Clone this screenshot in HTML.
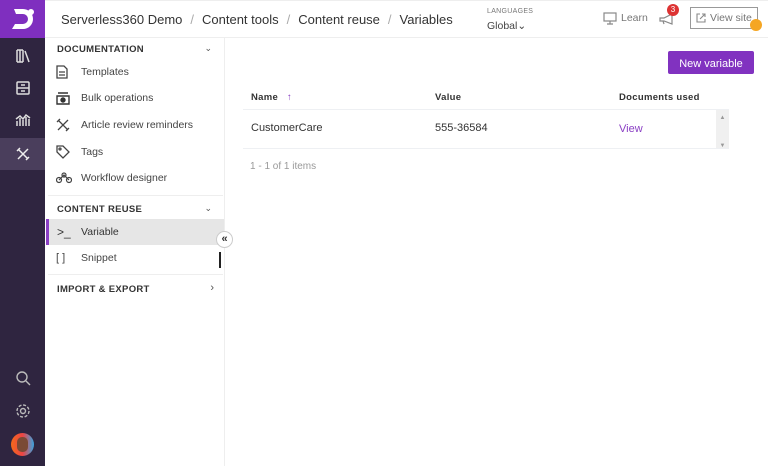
<!DOCTYPE html>
<html><head><style>
*{margin:0;padding:0;box-sizing:border-box}
body{width:768px;height:466px;overflow:hidden;font-family:"Liberation Sans",sans-serif;background:#fff;position:relative;color:#333}
.rail{position:absolute;left:0;top:0;width:45px;height:466px;background:#2f2540}
.logo{position:absolute;left:0;top:0;width:45px;height:38px;background:#7f2fbf}
.ri{position:absolute;left:0;width:45px;height:32px;display:flex;align-items:center;justify-content:center}
.hdr{position:absolute;left:45px;top:0;width:723px;height:38px;border-bottom:1px solid #eee;border-top:1px solid #eee}
.bc{position:absolute;left:16px;top:11px;font-size:13px;color:#333}
.bc span.s{color:#aaa;margin:0 8px}
.side{position:absolute;left:46px;top:38px;width:179px;height:428px;border-right:1px solid #eee}
.sec{position:absolute;left:11px;font-size:9.5px;font-weight:bold;color:#333;letter-spacing:.3px}
.it{position:absolute;left:0;width:178px;height:26px;font-size:10.5px;color:#444;display:flex;align-items:center;padding-left:35px}
.ic{position:absolute;left:10px;top:6px}
.hr{position:absolute;left:2px;width:175px;height:1px;background:#eee}
.chev{position:absolute;right:12px;font-size:9px;color:#555}
</style></head><body>
<div class="rail">
<div class="logo"><svg width="45" height="38"><path d="M14 9h9a10 10 0 0 1 0 20h-11l3-5h8a5 5 0 0 0 0-10h-7z" fill="#fff"/><circle cx="31" cy="12" r="3" fill="#fff"/></svg></div>
<div class="ri" style="top:40px"><svg width="16" height="16" fill="none" stroke="#ddd" stroke-width="1.5"><path d="M2 2v12M5 2v12M8 2v12M10 3l4 11M2 2h6M2 14h6"/></svg></div>
<div class="ri" style="top:72px"><svg width="16" height="16" fill="none" stroke="#ddd" stroke-width="1.5"><rect x="2" y="2" width="12" height="12" rx="1"/><path d="M2 8h12M6 5h4M6 11h4"/></svg></div>
<div class="ri" style="top:104px"><svg width="16" height="16" fill="none" stroke="#ddd" stroke-width="1.5"><path d="M2 14V9M5 14V6M8 14V8M11 14V5M14 14V7M1 7l4-3 3 3 3-4 4 3"/></svg></div>
<div class="ri" style="top:138px;background:#4a3e5c"><svg width="16" height="16" fill="none" stroke="#eee" stroke-width="1.5"><path d="M3 3l10 10M13 3L3 13M2 5l3-3M11 14l3-3"/></svg></div>
<div class="ri" style="top:362px"><svg width="16" height="16" fill="none" stroke="#bbb" stroke-width="1.4"><circle cx="7" cy="7" r="5"/><path d="M11 11l4 4"/></svg></div>
<div class="ri" style="top:395px"><svg width="16" height="16" fill="none" stroke="#bbb" stroke-width="1.4"><circle cx="8" cy="8" r="2.5"/><circle cx="8" cy="8" r="6" stroke-dasharray="3 1.7"/></svg></div>
<div style="position:absolute;left:11px;top:433px;width:23px;height:23px;border-radius:50%;background:linear-gradient(90deg,#f26a1b,#e44,#3aa3e0)"><div style="position:absolute;left:6px;top:4px;width:11px;height:15px;border-radius:5px;background:#7a4a35"></div></div>
</div>
<div class="hdr">
<div class="bc">Serverless360 Demo<span class="s">/</span>Content tools<span class="s">/</span>Content reuse<span class="s">/</span>Variables</div>
<div style="position:absolute;left:442px;top:7px;font-size:7px;color:#777;letter-spacing:.3px">LANGUAGES</div>
<div style="position:absolute;left:442px;top:19px;font-size:10.5px;color:#444">Global&#8964;</div>
<svg style="position:absolute;left:558px;top:11px" width="14" height="13" fill="none" stroke="#888" stroke-width="1.2"><rect x="1" y="1" width="12" height="8"/><path d="M7 9v3M4 12h6"/></svg>
<div style="position:absolute;left:576px;top:11px;font-size:10.5px;color:#777">Learn</div>
<svg style="position:absolute;left:614px;top:12px" width="15" height="12" fill="none" stroke="#888" stroke-width="1.2"><path d="M1 5h4l8-4v10l-8-3H1zM4 8l1 3"/></svg>
<div style="position:absolute;left:622px;top:3px;width:12px;height:12px;border-radius:50%;background:#d33;color:#fff;font-size:8px;text-align:center;line-height:12px">3</div>
<div style="position:absolute;left:645px;top:6px;width:68px;height:22px;border:1px solid #999;font-size:10.5px;color:#777;padding:4px 0 0 19px">View site</div>
<svg style="position:absolute;left:651px;top:12px" width="10" height="10" fill="none" stroke="#888" stroke-width="1.1"><path d="M4 1H1v8h8V6M6 1h3v3M9 1L4 6"/></svg>
<div style="position:absolute;left:705px;top:18px;width:12px;height:12px;border-radius:50%;background:#f5a623"></div>
</div>
<div class="side">
<div class="sec" style="top:6px">DOCUMENTATION</div><div class="chev" style="top:5px">&#8964;</div>
<div class="it" style="top:21px"><svg class="ic" width="12" height="14" fill="none" stroke="#444" stroke-width="1.3"><path d="M1 1h7l3 3v9H1zM3 7h6M3 10h6"/></svg>Templates</div>
<div class="it" style="top:47px"><svg class="ic" width="14" height="14" fill="none" stroke="#333" stroke-width="1.4"><path d="M2 2h10M1 5h12v8H1z"/><circle cx="7" cy="9" r="2" fill="#333"/></svg>Bulk operations</div>
<div class="it" style="top:74px"><svg class="ic" width="14" height="14" fill="none" stroke="#444" stroke-width="1.3"><path d="M2 2l10 10M12 2L2 12M1 4l3-3M10 13l3-3"/></svg>Article review reminders</div>
<div class="it" style="top:101px"><svg class="ic" width="14" height="14" fill="none" stroke="#444" stroke-width="1.3"><path d="M1 1h6l6 6-6 6-6-6z"/><circle cx="4" cy="4" r="1"/></svg>Tags</div>
<div class="it" style="top:127px"><svg class="ic" width="16" height="14" fill="none" stroke="#444" stroke-width="1.2"><circle cx="3" cy="9" r="2.5"/><circle cx="13" cy="9" r="2.5"/><circle cx="8" cy="4" r="2"/><path d="M3 9l5-5 5 5"/></svg>Workflow designer</div>
<div class="hr" style="top:157px"></div>
<div class="sec" style="top:166px">CONTENT REUSE</div><div class="chev" style="top:165px">&#8964;</div>
<div class="it" style="top:181px;background:#e6e6e6;border-left:3px solid #8a3fc4;padding-left:32px;color:#333"><span style="position:absolute;left:8px;font-size:12px">&gt;_</span>Variable</div>
<div class="it" style="top:207px"><span style="position:absolute;left:10px;font-size:11px">[ ]</span>Snippet</div>
<div style="position:absolute;left:173px;top:214px;width:2px;height:16px;background:#222"></div>
<div class="hr" style="top:236px"></div>
<div class="sec" style="top:246px">IMPORT &amp; EXPORT</div><div style="position:absolute;right:10px;top:244px;font-size:11px;color:#555">&#8250;</div>
</div>
<div style="position:absolute;left:216px;top:231px;width:17px;height:17px;border-radius:50%;background:#fff;border:1px solid #ccc;font-size:11px;font-weight:bold;text-align:center;line-height:14px;color:#333">«</div>
<div style="position:absolute;left:668px;top:51px;width:86px;height:23px;background:#8132c0;color:#fff;font-size:11px;text-align:center;line-height:24px;padding-top:1px;border-radius:2px">New variable</div>
<div style="position:absolute;left:251px;top:92px;font-size:9.5px;font-weight:bold;color:#333;letter-spacing:.3px">Name <span style="color:#8a3fc4;margin-left:6px">&#8593;</span></div>
<div style="position:absolute;left:435px;top:92px;font-size:9.5px;font-weight:bold;color:#333;letter-spacing:.3px">Value</div>
<div style="position:absolute;left:619px;top:92px;font-size:9.5px;font-weight:bold;color:#333;letter-spacing:.3px">Documents used</div>
<div style="position:absolute;left:243px;top:109px;width:486px;height:1px;background:#eef0f3"></div>
<div style="position:absolute;left:243px;top:148px;width:486px;height:1px;background:#eef0f3"></div>
<div style="position:absolute;left:716px;top:110px;width:13px;height:38px;background:#f0f0f0;font-size:6px;color:#999;text-align:center;line-height:14px;padding-top:1px">&#9650;<br><br>&#9660;</div>
<div style="position:absolute;left:251px;top:122px;font-size:11px;color:#333">CustomerCare</div>
<div style="position:absolute;left:435px;top:122px;font-size:11px;color:#333">555-36584</div>
<div style="position:absolute;left:619px;top:123px;font-size:11px;color:#8a3fc4">View</div>
<div style="position:absolute;left:250px;top:161px;font-size:10px;color:#999">1 - 1 of 1 items</div>
</body></html>
